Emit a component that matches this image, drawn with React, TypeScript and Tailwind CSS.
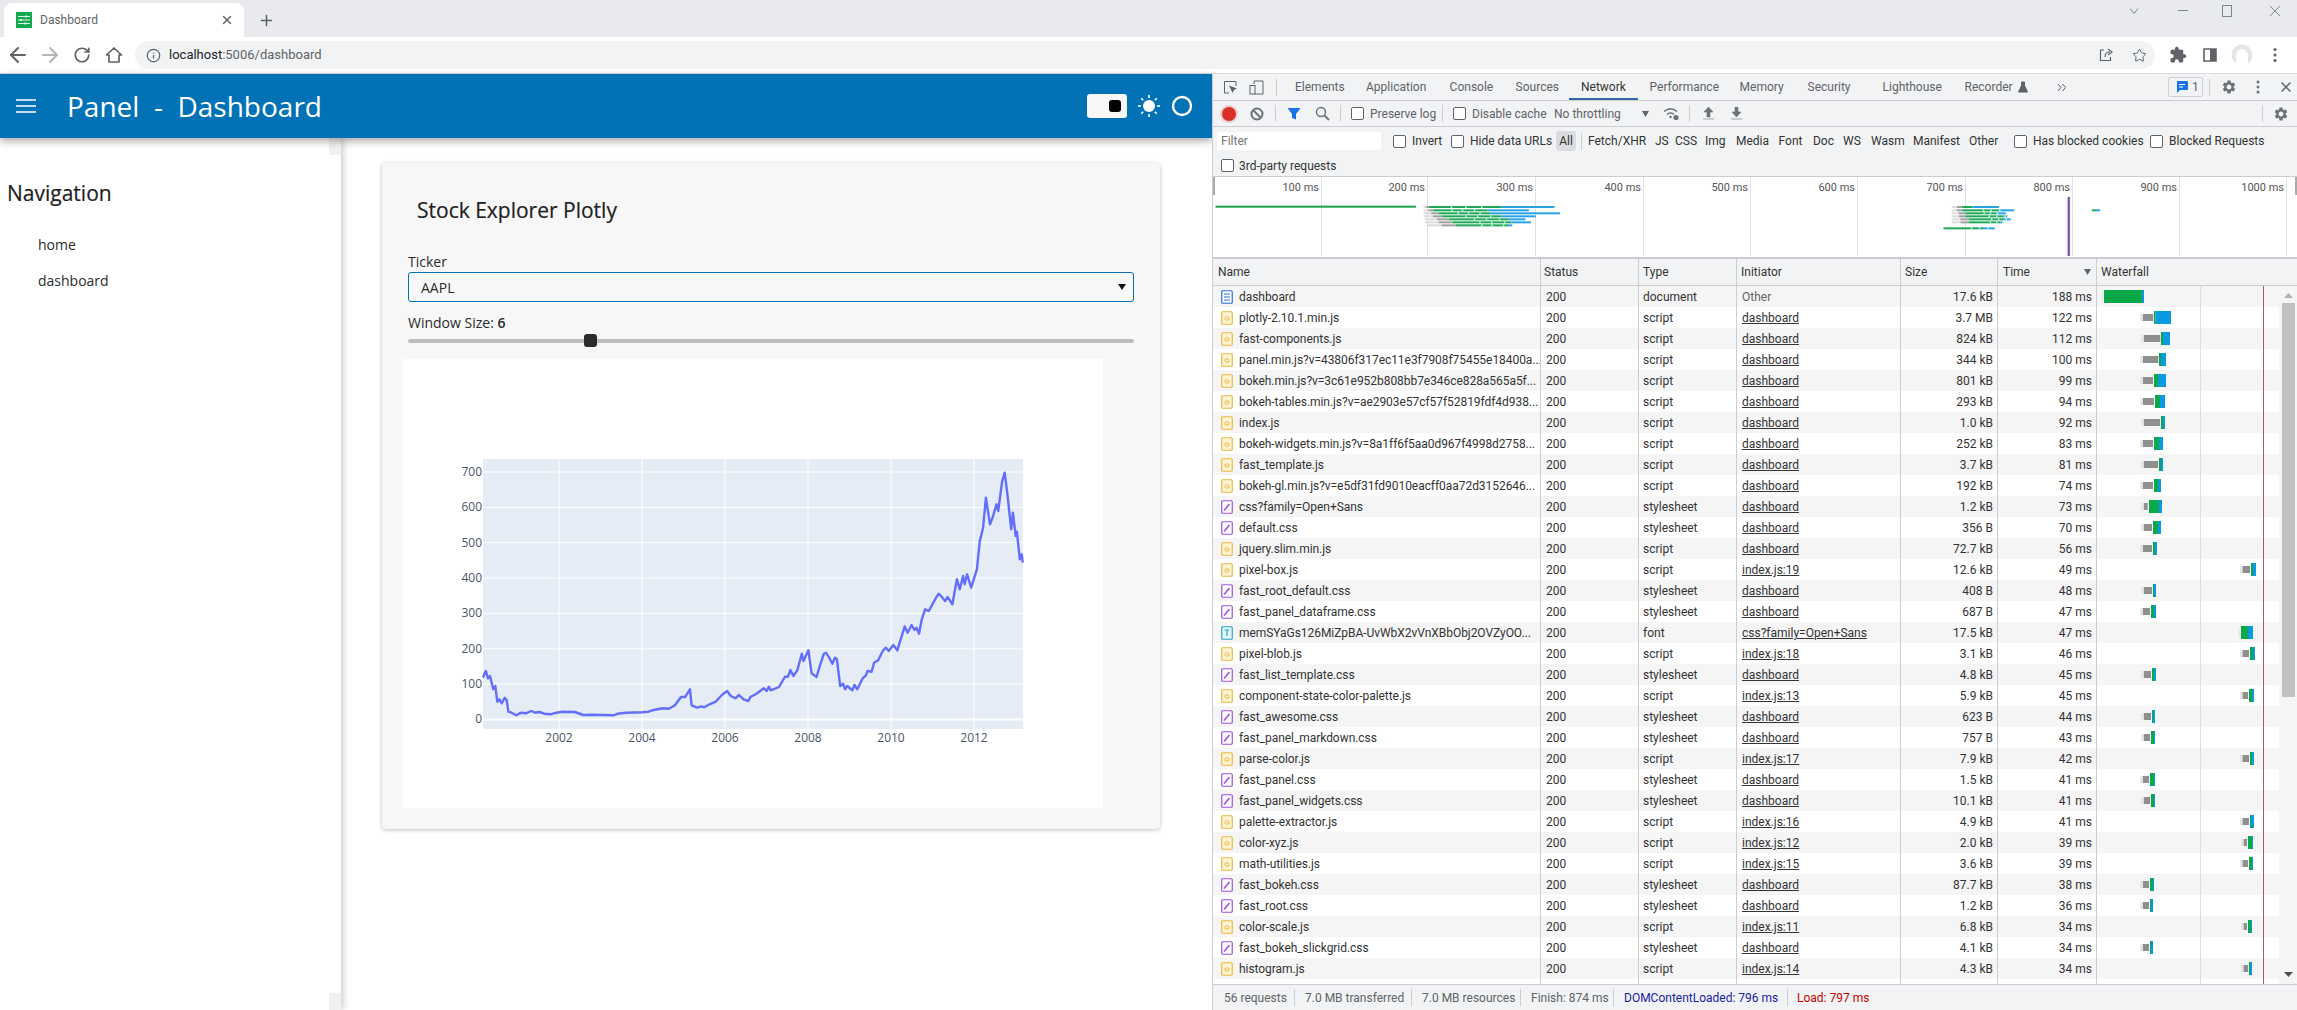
import React from 'react';
import { ArrowLeft, ArrowRight, RotateCw, Info, Star, X, Plus } from 'lucide-react';

const GEAR = "M19.14 12.94c.04-.3.06-.61.06-.94 0-.32-.02-.64-.07-.94l2.03-1.58c.18-.14.23-.41.12-.61l-1.92-3.32c-.12-.22-.37-.29-.59-.22l-2.39.96c-.5-.38-1.03-.7-1.62-.94l-.36-2.54c-.04-.24-.24-.41-.48-.41h-3.84c-.24 0-.43.17-.47.41l-.36 2.54c-.59.24-1.13.57-1.62.94l-2.39-.96c-.22-.08-.47 0-.59.22L2.74 8.87c-.12.21-.08.47.12.61l2.03 1.58c-.05.3-.09.63-.09.94s.02.64.07.94l-2.03 1.58c-.18.14-.23.41-.12.61l1.92 3.32c.12.22.37.29.59.22l2.39-.96c.5.38 1.03.7 1.62.94l.36 2.54c.05.24.24.41.48.41h3.84c.24 0 .44-.17.47-.41l.36-2.54c.59-.24 1.13-.56 1.62-.94l2.39.96c.22.08.47 0 .59-.22l1.92-3.32c.12-.22.07-.47-.12-.61l-2.01-1.58zM12 15.6c-1.98 0-3.6-1.62-3.6-3.6s1.62-3.6 3.6-3.6 3.6 1.62 3.6 3.6-1.62 3.6-3.6 3.6z";
const PUZZLE = "M20.5 11H19V7c0-1.1-.9-2-2-2h-4V3.5C13 2.12 11.88 1 10.5 1S8 2.12 8 3.5V5H4c-1.1 0-1.99.9-1.99 2v3.8H3.5c1.49 0 2.7 1.21 2.7 2.7s-1.21 2.7-2.7 2.7H2V20c0 1.1.9 2 2 2h3.8v-1.5c0-1.49 1.21-2.7 2.7-2.7 1.49 0 2.7 1.21 2.7 2.7V22H17c1.1 0 2-.9 2-2v-4h1.5c1.38 0 2.5-1.12 2.5-2.5S21.88 11 20.5 11z";

type Kind = 'doc' | 'js' | 'css' | 'font';
type Row = [string, string, string, string, string, Kind, number[]];

const rows: Row[] = [
  ['dashboard', 'document', 'Other', '17.6 kB', '188 ms', 'doc', [755, 760, 762, 876, 882]],
  ['plotly-2.10.1.min.js', 'script', 'dashboard', '3.7 MB', '122 ms', 'js', [871, 910, 912, 917, 963]],
  ['fast-components.js', 'script', 'dashboard', '824 kB', '112 ms', 'js', [874, 931, 933, 939, 960]],
  ['panel.min.js?v=43806f317ec11e3f7908f75455e18400a...', 'script', 'dashboard', '344 kB', '100 ms', 'js', [871, 925, 927, 933, 948]],
  ['bokeh.min.js?v=3c61e952b808bb7e346ce828a565a5f...', 'script', 'dashboard', '801 kB', '99 ms', 'js', [871, 909, 912, 924, 948]],
  ['bokeh-tables.min.js?v=ae2903e57cf57f52819fdf4d938...', 'script', 'dashboard', '293 kB', '94 ms', 'js', [871, 912, 915, 930, 945]],
  ['index.js', 'script', 'dashboard', '1.0 kB', '92 ms', 'js', [874, 930, 933, 939, 945]],
  ['bokeh-widgets.min.js?v=8a1ff6f5aa0d967f4998d2758...', 'script', 'dashboard', '252 kB', '83 ms', 'js', [871, 909, 912, 927, 939]],
  ['fast_template.js', 'script', 'dashboard', '3.7 kB', '81 ms', 'js', [874, 924, 927, 933, 939]],
  ['bokeh-gl.min.js?v=e5df31fd9010eacff0aa72d3152646...', 'script', 'dashboard', '192 kB', '74 ms', 'js', [871, 909, 912, 924, 933]],
  ['css?family=Open+Sans', 'stylesheet', 'dashboard', '1.2 kB', '73 ms', 'css', [874, 893, 897, 927, 936]],
  ['default.css', 'stylesheet', 'dashboard', '356 B', '70 ms', 'css', [874, 906, 909, 924, 933]],
  ['jquery.slim.min.js', 'script', 'dashboard', '72.7 kB', '56 ms', 'js', [871, 906, 909, 915, 921]],
  ['pixel-box.js', 'script', 'index.js:19', '12.6 kB', '49 ms', 'js', [1170, 1200, 1203, 1209, 1218]],
  ['fast_root_default.css', 'stylesheet', 'dashboard', '408 B', '48 ms', 'css', [874, 906, 909, 912, 918]],
  ['fast_panel_dataframe.css', 'stylesheet', 'dashboard', '687 B', '47 ms', 'css', [871, 900, 903, 912, 918]],
  ['memSYaGs126MiZpBA-UvWbX2vVnXBbObj2OVZyOO...', 'font', 'css?family=Open+Sans', '17.5 kB', '47 ms', 'font', [1165, 1171, 1173, 1194, 1209]],
  ['pixel-blob.js', 'script', 'index.js:18', '3.1 kB', '46 ms', 'js', [1170, 1197, 1200, 1209, 1215]],
  ['fast_list_template.css', 'stylesheet', 'dashboard', '4.8 kB', '45 ms', 'css', [874, 903, 906, 912, 918]],
  ['component-state-color-palette.js', 'script', 'index.js:13', '5.9 kB', '45 ms', 'js', [1170, 1194, 1197, 1206, 1212]],
  ['fast_awesome.css', 'stylesheet', 'dashboard', '623 B', '44 ms', 'css', [874, 903, 906, 909, 915]],
  ['fast_panel_markdown.css', 'stylesheet', 'dashboard', '757 B', '43 ms', 'css', [874, 900, 903, 912, 915]],
  ['parse-color.js', 'script', 'index.js:17', '7.9 kB', '42 ms', 'js', [1170, 1197, 1200, 1206, 1212]],
  ['fast_panel.css', 'stylesheet', 'dashboard', '1.5 kB', '41 ms', 'css', [871, 897, 900, 912, 915]],
  ['fast_panel_widgets.css', 'stylesheet', 'dashboard', '10.1 kB', '41 ms', 'css', [874, 900, 903, 912, 915]],
  ['palette-extractor.js', 'script', 'index.js:16', '4.9 kB', '41 ms', 'js', [1170, 1197, 1200, 1203, 1212]],
  ['color-xyz.js', 'script', 'index.js:12', '2.0 kB', '39 ms', 'js', [1173, 1191, 1194, 1206, 1209]],
  ['math-utilities.js', 'script', 'index.js:15', '3.6 kB', '39 ms', 'js', [1170, 1194, 1197, 1206, 1209]],
  ['fast_bokeh.css', 'stylesheet', 'dashboard', '87.7 kB', '38 ms', 'css', [871, 897, 900, 909, 912]],
  ['fast_root.css', 'stylesheet', 'dashboard', '1.2 kB', '36 ms', 'css', [871, 897, 900, 903, 909]],
  ['color-scale.js', 'script', 'index.js:11', '6.8 kB', '34 ms', 'js', [1173, 1191, 1194, 1203, 1206]],
  ['fast_bokeh_slickgrid.css', 'stylesheet', 'dashboard', '4.1 kB', '34 ms', 'css', [871, 897, 900, 903, 909]],
  ['histogram.js', 'script', 'index.js:14', '4.3 kB', '34 ms', 'js', [1173, 1194, 1197, 1200, 1206]],
];

const linePts: [number, number][] = [[130,710],[133,700],[137,690],[142,712],[147,705],[155,745],[160,735],[165,782],[170,775],[176,787],[183,770],[188,778],[192,812],[200,815],[212,823],[222,815],[235,817],[248,810],[258,815],[268,813],[280,818],[295,820],[310,815],[325,812],[355,813],[375,822],[400,821],[450,823],[460,818],[480,815],[520,814],[535,812],[545,808],[570,802],[585,803],[600,793],[615,768],[625,768],[637,745],[641,793],[655,800],[665,796],[672,799],[685,790],[700,782],[715,762],[728,750],[737,765],[748,772],[757,762],[768,775],[780,780],[785,768],[800,758],[818,742],[825,750],[830,737],[835,748],[855,738],[870,707],[877,707],[883,687],[890,705],[900,688],[911,638],[915,660],[927,628],[935,697],[947,708],[955,675],[965,638],[970,635],[978,650],[986,668],[992,650],[997,655],[1005,735],[1012,728],[1017,745],[1022,735],[1035,748],[1040,732],[1047,745],[1060,712],[1068,703],[1072,690],[1082,692],[1088,665],[1098,658],[1110,628],[1117,620],[1124,630],[1135,612],[1145,628],[1163,556],[1170,575],[1180,552],[1187,567],[1192,560],[1198,578],[1205,535],[1213,505],[1222,510],[1240,470],[1246,458],[1252,465],[1262,480],[1268,468],[1280,490],[1291,415],[1298,445],[1306,405],[1310,430],[1316,400],[1326,440],[1340,385],[1347,300],[1355,260],[1362,170],[1372,250],[1378,232],[1388,190],[1392,210],[1402,120],[1408,95],[1415,165],[1424,265],[1428,215],[1435,285],[1438,272],[1445,355],[1450,340],[1452,365]];

function StockChart() {
  const px = (z: number) => 27 + z / 2.45;
  const py = (z: number) => 82 + z / 3;
  const yTicks = [700, 600, 500, 400, 300, 200, 100, 0];
  const xTicks = [2002, 2004, 2006, 2008, 2010, 2012];
  return (
    <svg width="700" height="449" className="block" style={{ fontFamily: '"Open Sans", sans-serif' }}>
      <rect x="80" y="100" width="540" height="270" fill="#e5ecf6" />
      {xTicks.map((t, i) => {
        const x = 156 + i * 83;
        return (
          <g key={t}>
            <line x1={x} x2={x} y1="100" y2="370" stroke="#fff" strokeWidth="1" />
            <text x={x} y="383" textAnchor="middle" fontSize="12" fill="#4a5568">{t}</text>
          </g>
        );
      })}
      {yTicks.map((t, i) => {
        const y = 113 + i * 35.35;
        return (
          <g key={t}>
            <line x1="80" x2="620" y1={y} y2={y} stroke="#fff" strokeWidth={t === 0 ? 2 : 1} />
            <text x="79" y={y + 4} textAnchor="end" fontSize="12" fill="#4a5568">{t}</text>
          </g>
        );
      })}
      <polyline fill="none" stroke="#636efa" strokeWidth="2.4" strokeLinejoin="round" points={linePts.map(([a, b]) => `${px(a).toFixed(1)},${py(b).toFixed(1)}`).join(' ')} />
    </svg>
  );
}

function Overview() {
  const X = (z: number) => z / 1.4425 - 3;
  const Y = (z: number) => z / 3 - 7;
  const grid = [108, 214, 322, 430, 537, 644, 752, 859, 966, 1073];
  const c: number[][] = [
    [108, 308, 316, 420, 497], [118, 308, 322, 400, 460], [127, 308, 330, 405, 505], [136, 308, 335, 420, 470],
    [145, 310, 345, 430, 455], [154, 310, 350, 435, 463], [163, 313, 355, 430, 436],
    [108, 1070, 1085, 1100, 1138], [118, 1070, 1085, 1140, 1160], [127, 1070, 1090, 1135, 1148], [136, 1070, 1090, 1145, 1150],
    [145, 1070, 1095, 1145, 1155], [154, 1070, 1095, 1140, 1143], [172, 1058, 1058, 1115, 1132], [118, 1272, 1272, 1278, 1284],
  ];
  return (
    <svg width="1084" height="79" className="block" style={{ fontFamily: 'Roboto, sans-serif' }}>
      {grid.map((g, i) => (
        <g key={g}>
          <line x1={g + 0.5} x2={g + 0.5} y1="0" y2="79" stroke="#e2e2e2" />
          <text x={g - 2} y="14" textAnchor="end" fontSize="11" fill="#555">{(i + 1) * 100} ms</text>
        </g>
      ))}
      <rect x="0" y="0" width="2" height="18" fill="#aaa" />
      <rect x="1082" y="0" width="2" height="18" fill="#aaa" />
      <rect x={X(8)} y={Y(107)} width={X(297) - X(8)} height="2" fill="#16a34a" />
      {c.map((r, i) => (
        <g key={i}>
          <rect x={X(r[1])} y={Y(r[0])} width={(X(r[2]) - X(r[1])) / 2} height="2" fill="#dcdcdc" />
          <rect x={(X(r[1]) + X(r[2])) / 2} y={Y(r[0])} width={(X(r[2]) - X(r[1])) / 2} height="2" fill="#a0a0a0" />
          <rect x={X(r[2])} y={Y(r[0])} width={X(r[3]) - X(r[2])} height="2" fill="#1fa855" />
          <rect x={X(r[3])} y={Y(r[0])} width={X(r[4]) - X(r[3])} height="2" fill="#2aa3e6" />
          {r[3] - r[2] > 30 && [0.3, 0.5, 0.72].map((f) => (
            <rect key={f} x={X(r[2] + (r[3] - r[2]) * (f + i * 0.03))} y={Y(r[0])} width="1.500" height="2" fill="#bfeaf5" />
          ))}
        </g>
      ))}
      <line x1={X(1238)} x2={X(1238)} y1="20" y2="79" stroke="#1a1aa6" />
      <line x1={X(1240)} x2={X(1240)} y1="20" y2="79" stroke="#a8596b" />
    </svg>
  );
}

function Bars({ b, doc }: { b: number[]; doc?: boolean }) {
  const x = (z: number) => (z - 741) / 3;
  const [s, grayEnd, g, bl, end] = b;
  const lightEnd = doc ? grayEnd : Math.min(s + 8, grayEnd);
  const big = s === 1165;
  return (
    <svg width="183" height="21" className="block">
      <rect x={x(s)} y="7" width={x(lightEnd) - x(s)} height="7" fill="#e3e3e3" />
      {!doc && !big && <rect x={x(lightEnd)} y="7" width={x(grayEnd) - x(lightEnd)} height="7" fill="#8f8f8f" />}
      <rect x={x(g)} y="4" width={x(bl) - x(g)} height="13" fill="#0ba84a" />
      <rect x={x(bl)} y="4" width={x(end) - x(bl)} height="13" fill="#0a9ae4" />
    </svg>
  );
}

function FileIcon({ kind }: { kind: Kind }) {
  const col = { doc: '#2b6fd6', js: '#e8b93c', css: '#9b51e0', font: '#25a7bd' }[kind];
  const fill = { doc: '#fff', js: '#fdf3d6', css: '#fff', font: '#e6f8fb' }[kind];
  return (
    <svg width="12" height="14" viewBox="0 0 12 14" className="shrink-0">
      <rect x="0.75" y="0.75" width="10.5" height="12.5" rx="1" fill={fill} stroke={col} strokeWidth="1.2" />
      {kind === 'doc' && <path d="M3 4h6M3 7h6M3 10h6" stroke={col} strokeWidth="1.1" />}
      {kind === 'js' && <rect x="4" y="6" width="4" height="3" rx="1" fill="none" stroke={col} strokeWidth="1" />}
      {kind === 'css' && <path d="M3 10.5 8.5 4" stroke={col} strokeWidth="1.6" />}
      {kind === 'font' && <path d="M3.5 4h5M6 4v6" stroke={col} strokeWidth="1.2" />}
    </svg>
  );
}

const Check = ({ c = '' }: { c?: string }) => <span className={`block w-[13px] h-[13px] border border-[#5f6368] rounded-[2px] bg-white shrink-0 ${c}`} />;
const Sep = ({ c = '' }: { c?: string }) => <span className={`w-px h-[17px] bg-[#ccced2] shrink-0 ${c}`} />;
const Gear = ({ c = '' }: { c?: string }) => <svg width="16" height="16" viewBox="0 0 24 24" fill="#6e7276" className={`shrink-0 ${c}`}><path d={GEAR} /></svg>;

function ChromeBar() {
  return (
    <>
      <div className="h-[37px] bg-[#e8eaed] flex items-end shrink-0 relative pl-[4px]">
        <div className="w-[240px] h-[34px] bg-white rounded-t-[8px] flex items-center pl-[12px] pr-[10px]">
          <svg width="16" height="16" viewBox="0 0 16 16" className="shrink-0">
            <rect width="16" height="16" fill="#12a84f" />
            <path d="M2 4.5h12M2 8h12M2 11.5h12" stroke="#d8f3e2" strokeWidth="1.2" />
            <path d="M10 3.5v2M5 7v2M9 10.5v2" stroke="#fff" strokeWidth="1.4" />
          </svg>
          <span className="ml-[8px] text-[12px] text-[#5f6368] flex-1">Dashboard</span>
          <X size={14} strokeWidth={2.4} color="#5f6368" />
        </div>
        <Plus size={17} strokeWidth={2.2} color="#5f6368" className="ml-[14px] mb-[8px]" />
        <div className="ml-auto flex items-center h-[37px] pb-[16px] text-[#70757a]">
          <svg width="10" height="8" viewBox="0 0 10 8" className="mr-[39px]"><path d="M1 1.5 5 6.5 9 1.5" fill="none" stroke="#80868b" /></svg>
          <svg width="10" height="2" className="mr-[34px]"><rect width="10" height="1" fill="#80868b" /></svg>
          <svg width="10" height="12" className="mr-[37px]"><rect x="0.5" y="0.5" width="9" height="11" fill="none" stroke="#80868b" /></svg>
          <svg width="12" height="12" viewBox="0 0 12 12" className="mr-[16px]"><path d="M1 1 11 11M11 1 1 11" stroke="#80868b" /></svg>
        </div>
      </div>
      <div className="h-[37px] bg-white flex items-center shrink-0 border-b border-[#dadce0]">
        <ArrowLeft size={24} strokeWidth={2} color="#5f6368" className="ml-[6px]" />
        <ArrowRight size={24} strokeWidth={2} color="#b4b7ba" className="ml-[8px]" />
        <RotateCw size={18} strokeWidth={2.3} color="#5f6368" className="ml-[11px]" />
        <svg width="18" height="18" viewBox="0 0 18 18" className="ml-[14px]"><path d="M9 2 1.5 9H4v7h10V9h2.5z" fill="none" stroke="#5f6368" strokeWidth="1.7" strokeLinejoin="round" /></svg>
        <div className="ml-[12px] w-[2020px] h-[28px] bg-[#f1f3f4] rounded-full flex items-center pl-[11px] pr-[8px]">
          <Info size={15} strokeWidth={2} color="#5f6368" />
          <span className="ml-[8px] text-[13px] text-[#202124]">localhost<span className="text-[#5f6368]">:5006/dashboard</span></span>
          <svg width="16" height="16" viewBox="0 0 16 16" className="ml-auto mr-[18px]"><path d="M6 3H2.5v10.5h10V10M7 10c0-3 2-5 5-5M10 2l4 3-4 3" fill="none" stroke="#5f6368" strokeWidth="1.2" /></svg>
          <Star size={15} strokeWidth={1.6} color="#5f6368" />
        </div>
        <svg width="18" height="18" viewBox="0 0 24 24" fill="#5f6368" className="ml-[14px]"><path d={PUZZLE} /></svg>
        <svg width="16" height="16" viewBox="0 0 16 16" className="ml-[15px]"><path d="M2 2h12v12H2z" fill="none" stroke="#5f6368" strokeWidth="1.6" /><rect x="8" y="2" width="6" height="12" fill="#5f6368" /></svg>
        <svg width="22" height="22" viewBox="0 0 22 22" className="ml-[13px]"><circle cx="11" cy="11" r="10.5" fill="#e3e5e8" /><circle cx="11" cy="11" r="6" fill="#fff" /><path d="M5 22V12h12v10z" fill="#fff" /></svg>
        <svg width="4" height="16" viewBox="0 0 4 16" className="ml-[20px]"><circle cx="2" cy="2.5" r="1.6" fill="#5f6368" /><circle cx="2" cy="8" r="1.6" fill="#5f6368" /><circle cx="2" cy="13.5" r="1.6" fill="#5f6368" /></svg>
      </div>
    </>
  );
}

function Page() {
  return (
    <div className="w-[1212px] shrink-0 flex flex-col relative" style={{ fontFamily: '"Open Sans", sans-serif' }}>
      <div className="h-[64px] bg-[#0072b5] shrink-0 flex items-center text-white shadow-[0_3px_8px_rgba(0,0,0,0.35)] relative z-10">
        <svg width="20" height="14" className="ml-[16px] shrink-0"><path d="M0 1h20M0 7h20M0 13h20" stroke="#fff" strokeWidth="1.6" /></svg>
        <span className="ml-[31px] text-[28px] whitespace-pre leading-none">Panel  -  Dashboard</span>
        <div className="ml-auto w-[40px] h-[24px] bg-[#f7f7f7] rounded-[3px] flex items-center justify-end pr-[6px]">
          <span className="w-[12px] h-[12px] bg-black rounded-[3px]" />
        </div>
        <svg width="24" height="24" viewBox="0 0 24 24" className="ml-[10px]">
          <circle cx="12" cy="12" r="6" fill="#fff" />
          <path d="M12 1v3M12 20v3M1 12h3M20 12h3M4.2 4.2l2 2M17.8 17.8l2 2M4.2 19.8l2-2M17.8 6.2l2-2" stroke="#fff" strokeWidth="1.6" />
        </svg>
        <svg width="24" height="24" className="ml-[9px] mr-[18px]"><circle cx="12" cy="12" r="9" fill="none" stroke="#fff" strokeWidth="2.4" /></svg>
      </div>
      <div className="flex-1 flex min-h-0">
        <div className="w-[341px] bg-white shadow-[2px_0_7px_rgba(0,0,0,0.22)] relative shrink-0 pt-[41px]">
          <span className="absolute right-0 top-0 w-[12px] h-[17px] bg-[#f1f1f1]" />
          <span className="absolute right-0 bottom-0 w-[12px] h-[17px] bg-[#f1f1f1]" />
          <div className="pl-[7px] text-[21px] leading-[28px] text-[#212121] [-webkit-text-stroke:0.2px_#212121]">Navigation</div>
          <div className="pl-[38px] mt-[20px] text-[14px] leading-[36px] text-[#2b2b2b]">
            <div>home</div>
            <div>dashboard</div>
          </div>
        </div>
        <div className="flex-1 pl-[41px] pt-[25px]">
          <div className="w-[778px] h-[666px] bg-[#f7f7f7] rounded-[4px] shadow-[0_1px_4px_rgba(0,0,0,0.25)] pt-[33px] pl-[26px] pr-[26px]">
            <div className="pl-[9px] text-[21px] leading-[28px] text-[#212121] [-webkit-text-stroke:0.2px_#212121]">Stock Explorer Plotly</div>
            <div className="mt-[28px] text-[14px] leading-[20px] text-[#2b2b2b]">Ticker</div>
            <div className="h-[30px] border border-[#0072b5] rounded-[3px] flex items-center pl-[12px] pr-[7px] text-[14px] text-[#2b2b2b]">
              <span>AAPL</span>
              <svg width="8" height="6" className="ml-auto"><path d="M0 0h8L4 6z" fill="#111" /></svg>
            </div>
            <div className="mt-[11px] text-[14px] leading-[20px] text-[#2b2b2b]">Window Size: <b className="font-semibold">6</b></div>
            <div className="mt-[1px] h-[13px] flex items-center relative">
              <div className="w-full h-[4px] bg-[#bdbdbd] rounded-full" />
              <span className="absolute left-[176px] top-0 w-[13px] h-[13px] bg-[#2b2b2b] rounded-[3px]" />
            </div>
            <div className="-ml-[5px] mt-[12px] w-[700px] h-[449px] bg-white">
              <StockChart />
            </div>
          </div>
        </div>
      </div>
    </div>
  );
}

function TabsRow() {
  return (
    <div className="h-[27px] border-b border-[#cbcdd1] flex items-center text-[#5f6368] shrink-0 pl-[10px]">
      <svg width="15" height="15" viewBox="0 0 15 15" className="shrink-0"><path d="M6 13H1.5V1.5h11.5V6" fill="none" stroke="#5f6368" /><path d="M6 5.5l8 3-3 1.5-1.5 3z" fill="#5f6368" /></svg>
      <svg width="15" height="15" viewBox="0 0 15 15" className="ml-[11px] shrink-0"><path d="M5 4V1h9v13H6" fill="none" stroke="#5f6368" /><rect x="1" y="5.5" width="5" height="8.5" fill="none" stroke="#5f6368" /></svg>
      <Sep c="ml-[12px]" />
      <span className="ml-[18px] w-[71px]">Elements</span>
      <span className="w-[83.6px]">Application</span>
      <span className="w-[66px]">Console</span>
      <span className="w-[65.4px]">Sources</span>
      <span className="w-[68.6px] relative text-[#333] h-full flex items-center">Network<span className="absolute -left-[12px] bottom-0 w-[69px] h-[2px] bg-[#3367a5]" /></span>
      <span className="w-[90px]">Performance</span>
      <span className="w-[68px]">Memory</span>
      <span className="w-[75px]">Security</span>
      <span className="w-[82px]">Lighthouse</span>
      <span className="w-[53.5px]">Recorder</span>
      <svg width="10" height="12" viewBox="0 0 10 12" className="shrink-0"><path d="M3.5 1h3v3.5L9.5 11h-9L3.5 4.5z" fill="#5f6368" stroke="#5f6368" /></svg>
      <svg width="10" height="9" viewBox="0 0 10 9" className="ml-[29px] shrink-0"><path d="M1 1l3 3.5L1 8M5.500 1l3 3.500L5.500 8" fill="none" stroke="#5f6368" /></svg>
      <div className="ml-[101px] w-[35px] h-[20px] border border-[#d0d2d6] rounded-[2px] flex items-center pl-[7px] shrink-0">
        <svg width="12" height="12" viewBox="0 0 12 12"><path d="M1 0h10a1 1 0 0 1 1 1v7a1 1 0 0 1-1 1H4l-3 3V1z" fill="#1a73e8" /><path d="M3 3.500h6M3 6h4" stroke="#fff" strokeWidth="1" /></svg>
        <span className="ml-[4px]">1</span>
      </div>
      <Sep c="ml-[6px]" />
      <Gear c="ml-[11px]" />
      <svg width="4" height="14" viewBox="0 0 4 14" className="ml-[19px] shrink-0"><circle cx="2" cy="2" r="1.5" fill="#6e7276" /><circle cx="2" cy="7" r="1.5" fill="#6e7276" /><circle cx="2" cy="12" r="1.5" fill="#6e7276" /></svg>
      <svg width="10" height="10" viewBox="0 0 10 10" className="ml-[21px] shrink-0"><path d="M.5.5l9 9M9.500.5l-9 9" stroke="#5f6368" strokeWidth="1.5" /></svg>
    </div>
  );
}

function ControlsRow() {
  return (
    <div className="h-[26px] border-b border-[#cbcdd1] flex items-center text-[#5f6368] shrink-0 pl-[9px]">
      <span className="w-[14px] h-[14px] rounded-full bg-[#d93025] shadow-[0_0_0_2px_rgba(217,48,37,0.2)] shrink-0" />
      <svg width="14" height="14" viewBox="0 0 14 14" className="ml-[14px] shrink-0"><circle cx="7" cy="7" r="5.500" fill="none" stroke="#6e7276" strokeWidth="2" /><path d="M3 3l8 8" stroke="#6e7276" strokeWidth="2" /></svg>
      <Sep c="ml-[11px]" />
      <svg width="14" height="13" viewBox="0 0 14 13" className="ml-[11px] shrink-0"><path d="M.5 1h13L9 7v5.500L5 11V7z" fill="#1a73e8" /></svg>
      <svg width="15" height="15" viewBox="0 0 15 15" className="ml-[14px] shrink-0"><circle cx="6" cy="6" r="4.500" fill="none" stroke="#6e7276" strokeWidth="1.4" /><path d="M9.500 9.500 14 14" stroke="#6e7276" strokeWidth="1.800" /></svg>
      <Sep c="ml-[10px]" />
      <Check c="ml-[10px]" />
      <span className="ml-[6px] w-[72px]">Preserve log</span>
      <Sep />
      <Check c="ml-[10px]" />
      <span className="ml-[6px] w-[82px]">Disable cache</span>
      <span className="w-[88px]">No throttling</span>
      <svg width="7" height="6" className="shrink-0"><path d="M0 0h7L3.500 6z" fill="#5f6368" /></svg>
      <svg width="17" height="14" viewBox="0 0 17 14" className="ml-[14px] shrink-0"><path d="M1 4.500C5 1 10 1 14 4.500M4 7.500c2-2 5-2 7 0" fill="none" stroke="#6e7276" strokeWidth="1.400" /><circle cx="13" cy="10.500" r="2.600" fill="#6e7276" /><circle cx="7.500" cy="10" r="1.200" fill="#6e7276" /></svg>
      <Sep c="ml-[9px]" />
      <svg width="11" height="13" viewBox="0 0 11 13" className="ml-[13px] shrink-0"><path d="M5.500 0 10 5H7v5H4V5H1zM0 12h11" fill="#6e7276" stroke="#6e7276" strokeWidth=".6" /></svg>
      <svg width="11" height="13" viewBox="0 0 11 13" className="ml-[17px] shrink-0"><path d="M4 0h3v5h3l-4.500 5L1 5h3zM0 12h11" fill="#6e7276" stroke="#6e7276" strokeWidth=".6" /></svg>
      <Sep c="ml-[520px]" />
      <Gear c="ml-[10px]" />
    </div>
  );
}

function FilterRows() {
  return (
    <div className="h-[50px] border-b border-[#cbcdd1] text-[#333] shrink-0">
      <div className="h-[28px] flex items-center pl-[4px]">
        <span className="w-[164px] h-[18px] bg-white pl-[4px] text-[#757575] leading-[18px] shrink-0">Filter</span>
        <Check c="ml-[12px]" />
        <span className="ml-[6px] w-[39px]">Invert</span>
        <Check />
        <span className="ml-[6px] w-[86px]">Hide data URLs</span>
        <span className="w-[20px] h-[20px] bg-[#dadce0] rounded-[3px] flex items-center justify-center">All</span>
        <Sep c="ml-[5px]" />
        <span className="ml-[6px] w-[67px]">Fetch/XHR</span>
        <span className="w-[20px]">JS</span>
        <span className="w-[30px]">CSS</span>
        <span className="w-[31px]">Img</span>
        <span className="w-[42.6px]">Media</span>
        <span className="w-[34.4px]">Font</span>
        <span className="w-[30px]">Doc</span>
        <span className="w-[28px]">WS</span>
        <span className="w-[42px]">Wasm</span>
        <span className="w-[56px]">Manifest</span>
        <span className="w-[45px]">Other</span>
        <Check />
        <span className="ml-[6px] w-[117px]">Has blocked cookies</span>
        <Check />
        <span className="ml-[6px]">Blocked Requests</span>
      </div>
      <div className="h-[21px] flex items-center pl-[8px]">
        <Check />
        <span className="ml-[5px]">3rd-party requests</span>
      </div>
    </div>
  );
}

const GRID = 'grid grid-cols-[328px_98px_98px_164px_97px_99px_182px] w-[1066px]';

function Table() {
  return (
    <>
      <div className="h-[29px] bg-[#f1f3f4] border-t-2 border-[#cbcdd1] border-b shrink-0 text-[#333]">
        <div className={`${GRID} h-full`}>
          <div className="border-r border-[#cbcdd1] pl-[5px] leading-[26px]">Name</div>
          <div className="border-r border-[#cbcdd1] pl-[3px] leading-[26px]">Status</div>
          <div className="border-r border-[#cbcdd1] pl-[4px] leading-[26px]">Type</div>
          <div className="border-r border-[#cbcdd1] pl-[4px] leading-[26px]">Initiator</div>
          <div className="border-r border-[#cbcdd1] pl-[4px] leading-[26px]">Size</div>
          <div className="border-r border-[#cbcdd1] pl-[5px] leading-[26px] flex items-center justify-between pr-[5px]">Time<svg width="7" height="6"><path d="M0 0h7L3.500 6z" fill="#5f6368" /></svg></div>
          <div className="pl-[4px] leading-[26px]">Waterfall</div>
        </div>
      </div>
      <div className="flex-1 flex min-h-0 relative bg-white text-[#333]">
        <div className="w-[1066px]">
          {rows.map((r, i) => (
            <div key={i} className={`${GRID} h-[21px] leading-[19px] ${i % 2 === 0 ? 'bg-[#f5f5f5]' : 'bg-white'}`}>
              <div className="border-r border-[#cbcdd1] pl-[8px] flex items-center overflow-hidden whitespace-nowrap">
                <FileIcon kind={r[5]} />
                <span className="ml-[6px] mt-[2px] tracking-[-0.05px]">{r[0]}</span>
              </div>
              <div className="border-r border-[#cbcdd1] pl-[5px] pt-[2px]">200</div>
              <div className="border-r border-[#cbcdd1] pl-[4px] pt-[2px]">{r[1]}</div>
              <div className="border-r border-[#cbcdd1] pl-[5px] pt-[2px]">
                {r[2] === 'Other' ? <span className="text-[#5f6368]">Other</span> : <span className="underline">{r[2]}</span>}
              </div>
              <div className="border-r border-[#cbcdd1] text-right pr-[4px] pt-[2px]">{r[3]}</div>
              <div className="border-r border-[#cbcdd1] text-right pr-[4px] pt-[2px]">{r[4]}</div>
              <div><Bars b={r[6]} doc={r[5] === 'doc'} /></div>
            </div>
          ))}
          <div className={`${GRID} h-[5px]`}>
            <div className="border-r border-[#cbcdd1]" />
            <div className="border-r border-[#cbcdd1]" />
            <div className="border-r border-[#cbcdd1]" />
            <div className="border-r border-[#cbcdd1]" />
            <div className="border-r border-[#cbcdd1]" />
            <div className="border-r border-[#cbcdd1]" />
            <div />
          </div>
        </div>
        <span className="absolute left-[987px] top-0 bottom-0 w-px bg-[#dedede]" />
        <span className="absolute left-[1050px] top-0 bottom-0 w-px bg-[#a8596b]" />
        <div className="w-[18px] bg-[#f5f5f5] flex flex-col items-center">
          <svg width="9" height="5" className="mt-[7px] shrink-0"><path d="M0 5h9L4.500 0z" fill="#b0b0b0" /></svg>
          <div className="mt-[5px] w-[13px] h-[394px] bg-[#c1c1c1] shrink-0" />
          <svg width="9" height="5" className="mt-auto mb-[7px] shrink-0"><path d="M0 0h9L4.500 5z" fill="#505050" /></svg>
        </div>
      </div>
      <div className="h-[26px] border-t border-[#cbcdd1] bg-[#f1f3f4] flex items-center text-[#5f6368] shrink-0 pl-[11px]">
        <span className="w-[70px]">56 requests</span><Sep />
        <span className="ml-[10px] w-[106px]">7.0 MB transferred</span><Sep />
        <span className="ml-[10px] w-[98px]">7.0 MB resources</span><Sep />
        <span className="ml-[10px] w-[82px]">Finish: 874 ms</span><Sep />
        <span className="ml-[10px] w-[163px] text-[#1a1aa6]">DOMContentLoaded: 796 ms</span><Sep />
        <span className="ml-[9px] text-[#c80000]">Load: 797 ms</span>
      </div>
    </>
  );
}

export default function App() {
  return (
    <div className="w-[2297px] h-[1010px] overflow-hidden flex flex-col bg-white" style={{ fontFamily: 'Roboto, sans-serif' }}>
      <ChromeBar />
      <div className="flex-1 flex min-h-0">
        <Page />
        <div className="flex-1 min-w-0 bg-[#f1f3f4] border-l border-[#cbcdd1] flex flex-col text-[12px] relative z-20">
          <TabsRow />
          <ControlsRow />
          <FilterRows />
          <div className="h-[80px] bg-white shrink-0"><Overview /></div>
          <Table />
        </div>
      </div>
    </div>
  );
}
